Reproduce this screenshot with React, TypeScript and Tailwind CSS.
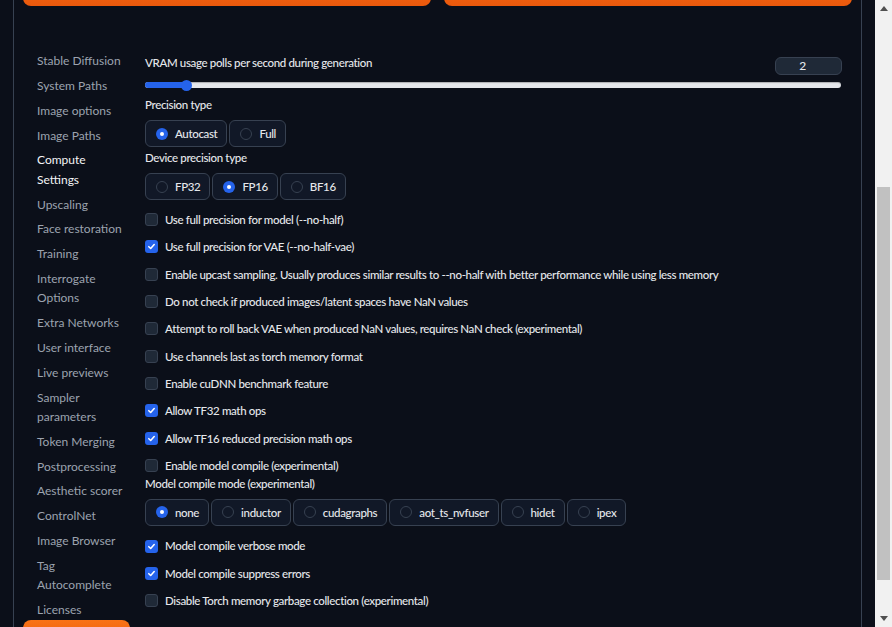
const sections: string[][] = [
  ["Stable Diffusion"],
  ["System Paths"],
  ["Image options"],
  ["Image Paths"],
  ["Compute", "Settings"],
  ["Upscaling"],
  ["Face restoration"],
  ["Training"],
  ["Interrogate", "Options"],
  ["Extra Networks"],
  ["User interface"],
  ["Live previews"],
  ["Sampler", "parameters"],
  ["Token Merging"],
  ["Postprocessing"],
  ["Aesthetic scorer"],
  ["ControlNet"],
  ["Image Browser"],
  ["Tag", "Autocomplete"],
  ["Licenses"],
];

const flags: [string, boolean][] = [
  ["Use full precision for model (--no-half)", false],
  ["Use full precision for VAE (--no-half-vae)", true],
  ["Enable upcast sampling. Usually produces similar results to --no-half with better performance while using less memory", false],
  ["Do not check if produced images/latent spaces have NaN values", false],
  ["Attempt to roll back VAE when produced NaN values, requires NaN check (experimental)", false],
  ["Use channels last as torch memory format", false],
  ["Enable cuDNN benchmark feature", false],
  ["Allow TF32 math ops", true],
  ["Allow TF16 reduced precision math ops", true],
  ["Enable model compile (experimental)", false],
];

const compileFlags: [string, boolean][] = [
  ["Model compile verbose mode", true],
  ["Model compile suppress errors", true],
  ["Disable Torch memory garbage collection (experimental)", false],
];

function Checkbox({ label, checked }: { label: string; checked: boolean }) {
  return (
    <div className="flex h-[27.33px] items-center gap-[7px]">
      {checked ? (
        <span className="flex h-[13px] w-[13px] items-center justify-center rounded-[3px] bg-[#2563eb]">
          <svg width="9" height="9" viewBox="0 0 10 10" fill="none">
            <path d="M2 5.2 4.1 7.2 8 2.8" stroke="white" strokeWidth="1.7" strokeLinecap="round" strokeLinejoin="round" />
          </svg>
        </span>
      ) : (
        <span className="h-[13px] w-[13px] rounded-[3px] border border-[#374151] bg-[#1f2937]" />
      )}
      <span className="whitespace-nowrap">{label}</span>
    </div>
  );
}

function RadioGroup({ options, value }: { options: string[]; value: string }) {
  return (
    <div className="flex gap-[2px]">
      {options.map((o) => (
        <div
          key={o}
          className="flex h-[27px] items-center gap-[7px] rounded-[6px] border border-[#374151] bg-[#111827] pl-[10px] pr-[9px]"
        >
          {o === value ? (
            <span className="flex h-[12px] w-[12px] items-center justify-center rounded-full bg-[#2563eb]">
              <span className="h-[4px] w-[4px] rounded-full bg-white" />
            </span>
          ) : (
            <span className="h-[12px] w-[12px] rounded-full border border-[#374151] bg-[#111827]" />
          )}
          <span>{o}</span>
        </div>
      ))}
    </div>
  );
}

export default function App() {
  return (
    <div className="flex h-[627px] w-[892px] overflow-hidden bg-[#0b0f19] font-['Lato',sans-serif] text-[#e5e7eb]">
      <div className="flex-1 pl-[13px]">
        <div className="flex h-full w-[849px] flex-col border-x border-[#374151]">
          {/* top buttons, mostly scrolled out */}
          <div className="flex gap-[13px] px-[9px]">
            <div className="-mt-[34px] h-[40px] flex-1 rounded-[8px] bg-gradient-to-b from-[#f97316] to-[#ea580c]" />
            <div className="-mt-[34px] h-[40px] flex-1 rounded-[8px] bg-gradient-to-b from-[#f97316] to-[#ea580c]" />
          </div>

          <div className="flex items-start gap-[14px] pl-[9px]">
            {/* sidebar */}
            <div className="flex w-[108px] flex-col pt-[42.6px] text-[12px]">
              {sections.map((s, i) => (
                <div
                  key={i}
                  className={`px-[14px] py-[2.65px] leading-[19.5px] whitespace-nowrap ${i === 4 ? "text-[#f3f4f6]" : "text-[#9ca3af]"}`}
                >
                  {s.map((line) => (
                    <div key={line}>{line}</div>
                  ))}
                </div>
              ))}
              <div className="-mt-[2px] h-[30px] w-[107px] rounded-[8px] bg-gradient-to-b from-[#f97316] to-[#ea580c]" />
            </div>

            {/* settings */}
            <div className="flex w-[697px] flex-col pt-[49px] text-[11.5px] font-medium tracking-[-0.35px]">
              <div className="flex items-start justify-between">
                <span className="leading-[16px]">VRAM usage polls per second during generation</span>
                <div className="mt-[2px] flex h-[18px] w-[67px] items-center justify-center rounded-[6px] border border-[#374151] bg-[#1f2937] pr-[12px] text-[12px]">
                  2
                </div>
              </div>
              <div className="relative mt-[4px] flex h-[12px] w-[696px] items-center">
                <div className="flex h-[6px] w-full overflow-hidden rounded-full bg-[#e5e7eb] shadow-[inset_0_1px_1px_rgba(0,0,0,0.25)]">
                  <div className="h-full w-[41px] bg-[#2563eb]" />
                </div>
                <div className="absolute left-[35.5px] top-[0.5px] h-[11px] w-[11px] rounded-full bg-[#2563eb]" />
              </div>

              <div className="mt-[6px] leading-[16px]">Precision type</div>
              <div className="mt-[7px]">
                <RadioGroup options={["Autocast", "Full"]} value="Autocast" />
              </div>

              <div className="mt-[3px] leading-[16px]">Device precision type</div>
              <div className="mt-[7px]">
                <RadioGroup options={["FP32", "FP16", "BF16"]} value="FP16" />
              </div>

              <div className="mt-[6px] flex flex-col">
                {flags.map(([l, c]) => (
                  <Checkbox key={l} label={l} checked={c} />
                ))}
              </div>

              <div className="-mt-[3.4px] leading-[16px]">Model compile mode (experimental)</div>
              <div className="mt-[7px]">
                <RadioGroup
                  options={["none", "inductor", "cudagraphs", "aot_ts_nvfuser", "hidet", "ipex"]}
                  value="none"
                />
              </div>

              <div className="mt-[6.5px] flex flex-col">
                {compileFlags.map(([l, c]) => (
                  <Checkbox key={l} label={l} checked={c} />
                ))}
              </div>
            </div>
          </div>
        </div>
      </div>

      {/* scrollbar */}
      <div className="flex w-[17px] flex-col bg-[#f1f1f1]">
        <div className="flex h-[17px] items-center justify-center">
          <svg width="8" height="5" viewBox="0 0 8 5">
            <path d="M0 5 4 0 8 5Z" fill="#505050" />
          </svg>
        </div>
        <div className="flex-1 px-[2px]">
          <div className="mt-[170px] h-[393px] bg-[#c1c1c1]" />
        </div>
        <div className="flex h-[17px] items-center justify-center">
          <svg width="8" height="5" viewBox="0 0 8 5">
            <path d="M0 0 4 5 8 0Z" fill="#505050" />
          </svg>
        </div>
      </div>
    </div>
  );
}
